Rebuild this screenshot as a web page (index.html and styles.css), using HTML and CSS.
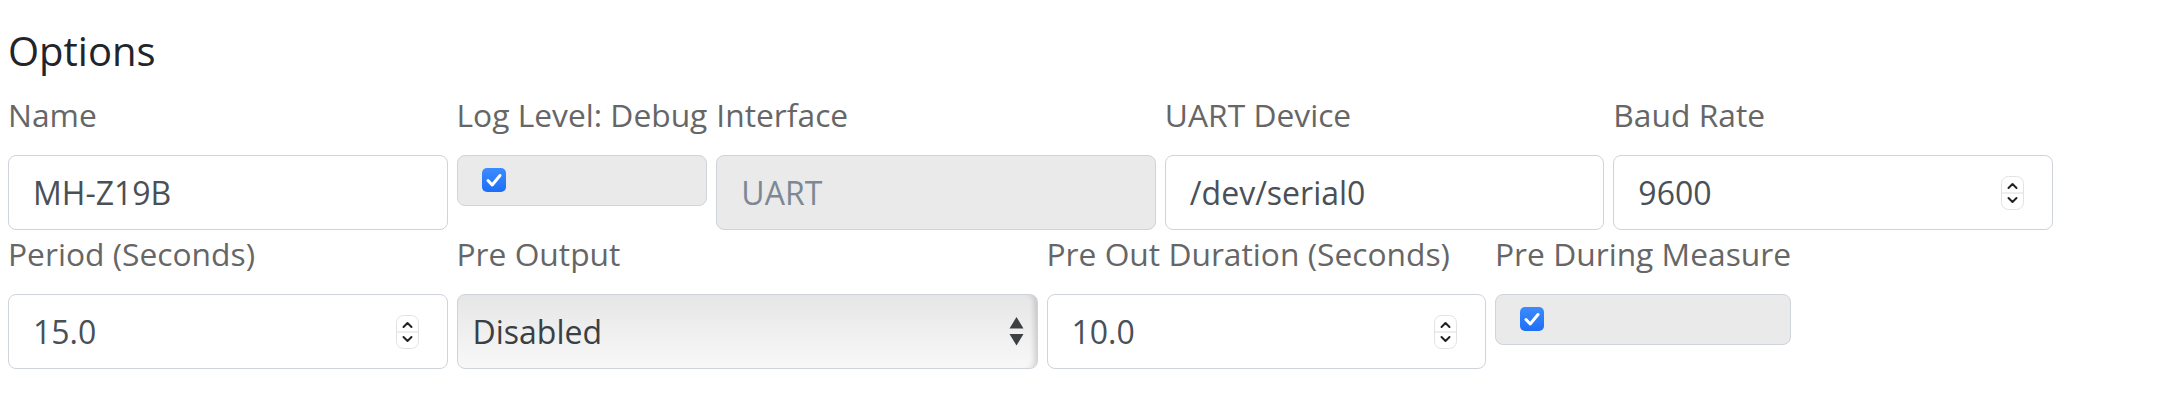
FILE: index.html
```html
<!DOCTYPE html>
<html lang="en">
<head>
<meta charset="utf-8">
<title>Options</title>
<link rel="stylesheet" href="styles.css">
</head>
<body>
<div class="page">
  <h5 class="title">Options</h5>
  <div class="fields">
    <div class="field w-text">
      <label class="lbl">Name</label>
      <div class="ctl">MH-Z19B</div>
    </div>
    <div class="field">
      <label class="lbl">Log Level: Debug</label>
      <div class="chkbox"><span class="chk"><svg viewBox="0 0 24 24" width="24" height="24"><path d="M6 12.5 L10.2 17 L18 7.5" fill="none" stroke="#fff" stroke-width="3" stroke-linecap="round" stroke-linejoin="round"/></svg></span></div>
    </div>
    <div class="field w-text">
      <label class="lbl">Interface</label>
      <div class="ctl disabled">UART</div>
    </div>
    <div class="field w-text">
      <label class="lbl">UART Device</label>
      <div class="ctl">/dev/serial0</div>
    </div>
    <div class="field w-text">
      <label class="lbl">Baud Rate</label>
      <div class="ctl num"><span class="val">9600</span><span class="spin"><svg viewBox="0 0 23 34" width="23" height="34"><rect x="0.5" y="0.5" width="22" height="33" rx="7" fill="#fff" stroke="#e2e2e2"/><line x1="1" y1="17" x2="22" y2="17" stroke="#dcdcdc"/><path d="M7.5 12 L11.5 8 L15.5 12" fill="none" stroke="#222" stroke-width="2" stroke-linecap="round" stroke-linejoin="round"/><path d="M7.5 22 L11.5 26 L15.5 22" fill="none" stroke="#222" stroke-width="2" stroke-linecap="round" stroke-linejoin="round"/></svg></span></div>
    </div>
    <div class="field w-text">
      <label class="lbl">Period (Seconds)</label>
      <div class="ctl num"><span class="val">15.0</span><span class="spin"><svg viewBox="0 0 23 34" width="23" height="34"><rect x="0.5" y="0.5" width="22" height="33" rx="7" fill="#fff" stroke="#e2e2e2"/><line x1="1" y1="17" x2="22" y2="17" stroke="#dcdcdc"/><path d="M7.5 12 L11.5 8 L15.5 12" fill="none" stroke="#222" stroke-width="2" stroke-linecap="round" stroke-linejoin="round"/><path d="M7.5 22 L11.5 26 L15.5 22" fill="none" stroke="#222" stroke-width="2" stroke-linecap="round" stroke-linejoin="round"/></svg></span></div>
    </div>
    <div class="field w-select">
      <label class="lbl">Pre Output</label>
      <div class="sel"><span class="val">Disabled</span><span class="arrows"><svg viewBox="0 0 15 29" width="15" height="29"><path d="M7.5 0 L14.5 11.5 L0.5 11.5 Z" fill="#3c4043"/><path d="M0.5 17 L14.5 17 L7.5 28.5 Z" fill="#3c4043"/></svg></span></div>
    </div>
    <div class="field w-text">
      <label class="lbl">Pre Out Duration (Seconds)</label>
      <div class="ctl num"><span class="val">10.0</span><span class="spin"><svg viewBox="0 0 23 34" width="23" height="34"><rect x="0.5" y="0.5" width="22" height="33" rx="7" fill="#fff" stroke="#e2e2e2"/><line x1="1" y1="17" x2="22" y2="17" stroke="#dcdcdc"/><path d="M7.5 12 L11.5 8 L15.5 12" fill="none" stroke="#222" stroke-width="2" stroke-linecap="round" stroke-linejoin="round"/><path d="M7.5 22 L11.5 26 L15.5 22" fill="none" stroke="#222" stroke-width="2" stroke-linecap="round" stroke-linejoin="round"/></svg></span></div>
    </div>
    <div class="field">
      <label class="lbl">Pre During Measure</label>
      <div class="chkbox"><span class="chk"><svg viewBox="0 0 24 24" width="24" height="24"><path d="M6 12.5 L10.2 17 L18 7.5" fill="none" stroke="#fff" stroke-width="3" stroke-linecap="round" stroke-linejoin="round"/></svg></span></div>
    </div>
  </div>
</div>
</body>
</html>
```

FILE: styles.css
```css
* { box-sizing: border-box; }
html, body { margin: 0; padding: 0; background: #fff; }
body { font-family: "Open Sans", "Liberation Sans", sans-serif; }

.page { padding: 27px 8px 0 8px; }

.title {
  margin: 0 0 16px 0;
  font-size: 40px;
  line-height: 48px;
  font-weight: 400;
  color: #212529;
}

.fields {
  display: flex;
  flex-wrap: wrap;
  column-gap: 9px;
  width: 2080px;
}

.field { display: flex; flex-direction: column; }
.w-text { width: 439.5px; }
.w-select { width: 581px; }

.lbl {
  display: block;
  font-size: 31.75px;
  line-height: 48px;
  color: #666;
  margin-bottom: 16px;
  white-space: nowrap;
}

.ctl {
  height: 75px;
  border: 1px solid #ced4da;
  border-radius: 8px;
  padding: 12px 24px;
  font-size: 32px;
  line-height: 48px;
  color: #495057;
  background: #fff;
  display: flex;
  align-items: center;
}
.ctl.disabled { background: #eaeaea; color: #7d8894; }
.ctl.num { justify-content: space-between; padding-right: 28px; }
.spin { display: flex; }

.chkbox {
  height: 51px;
  border: 1px solid #ced4da;
  border-radius: 8px;
  background: #eaeaea;
  padding: 12px 24px;
  display: flex;
  align-items: flex-start;
}
.chk {
  width: 24px;
  height: 24px;
  border-radius: 5px;
  background: linear-gradient(#3d8bff, #1d6ef5);
  display: flex;
}

.sel {
  height: 75px;
  border: 1px solid #ced4da;
  border-radius: 8px;
  padding: 0 13px 0 15px;
  font-size: 32px;
  line-height: 48px;
  color: #3a3f44;
  background: linear-gradient(#e6e6e6, #f8f8f8);
  box-shadow: inset -7px 0 6px -5px rgba(0,0,0,0.18);
  display: flex;
  align-items: center;
  justify-content: space-between;
}
.arrows { display: flex; }
```
